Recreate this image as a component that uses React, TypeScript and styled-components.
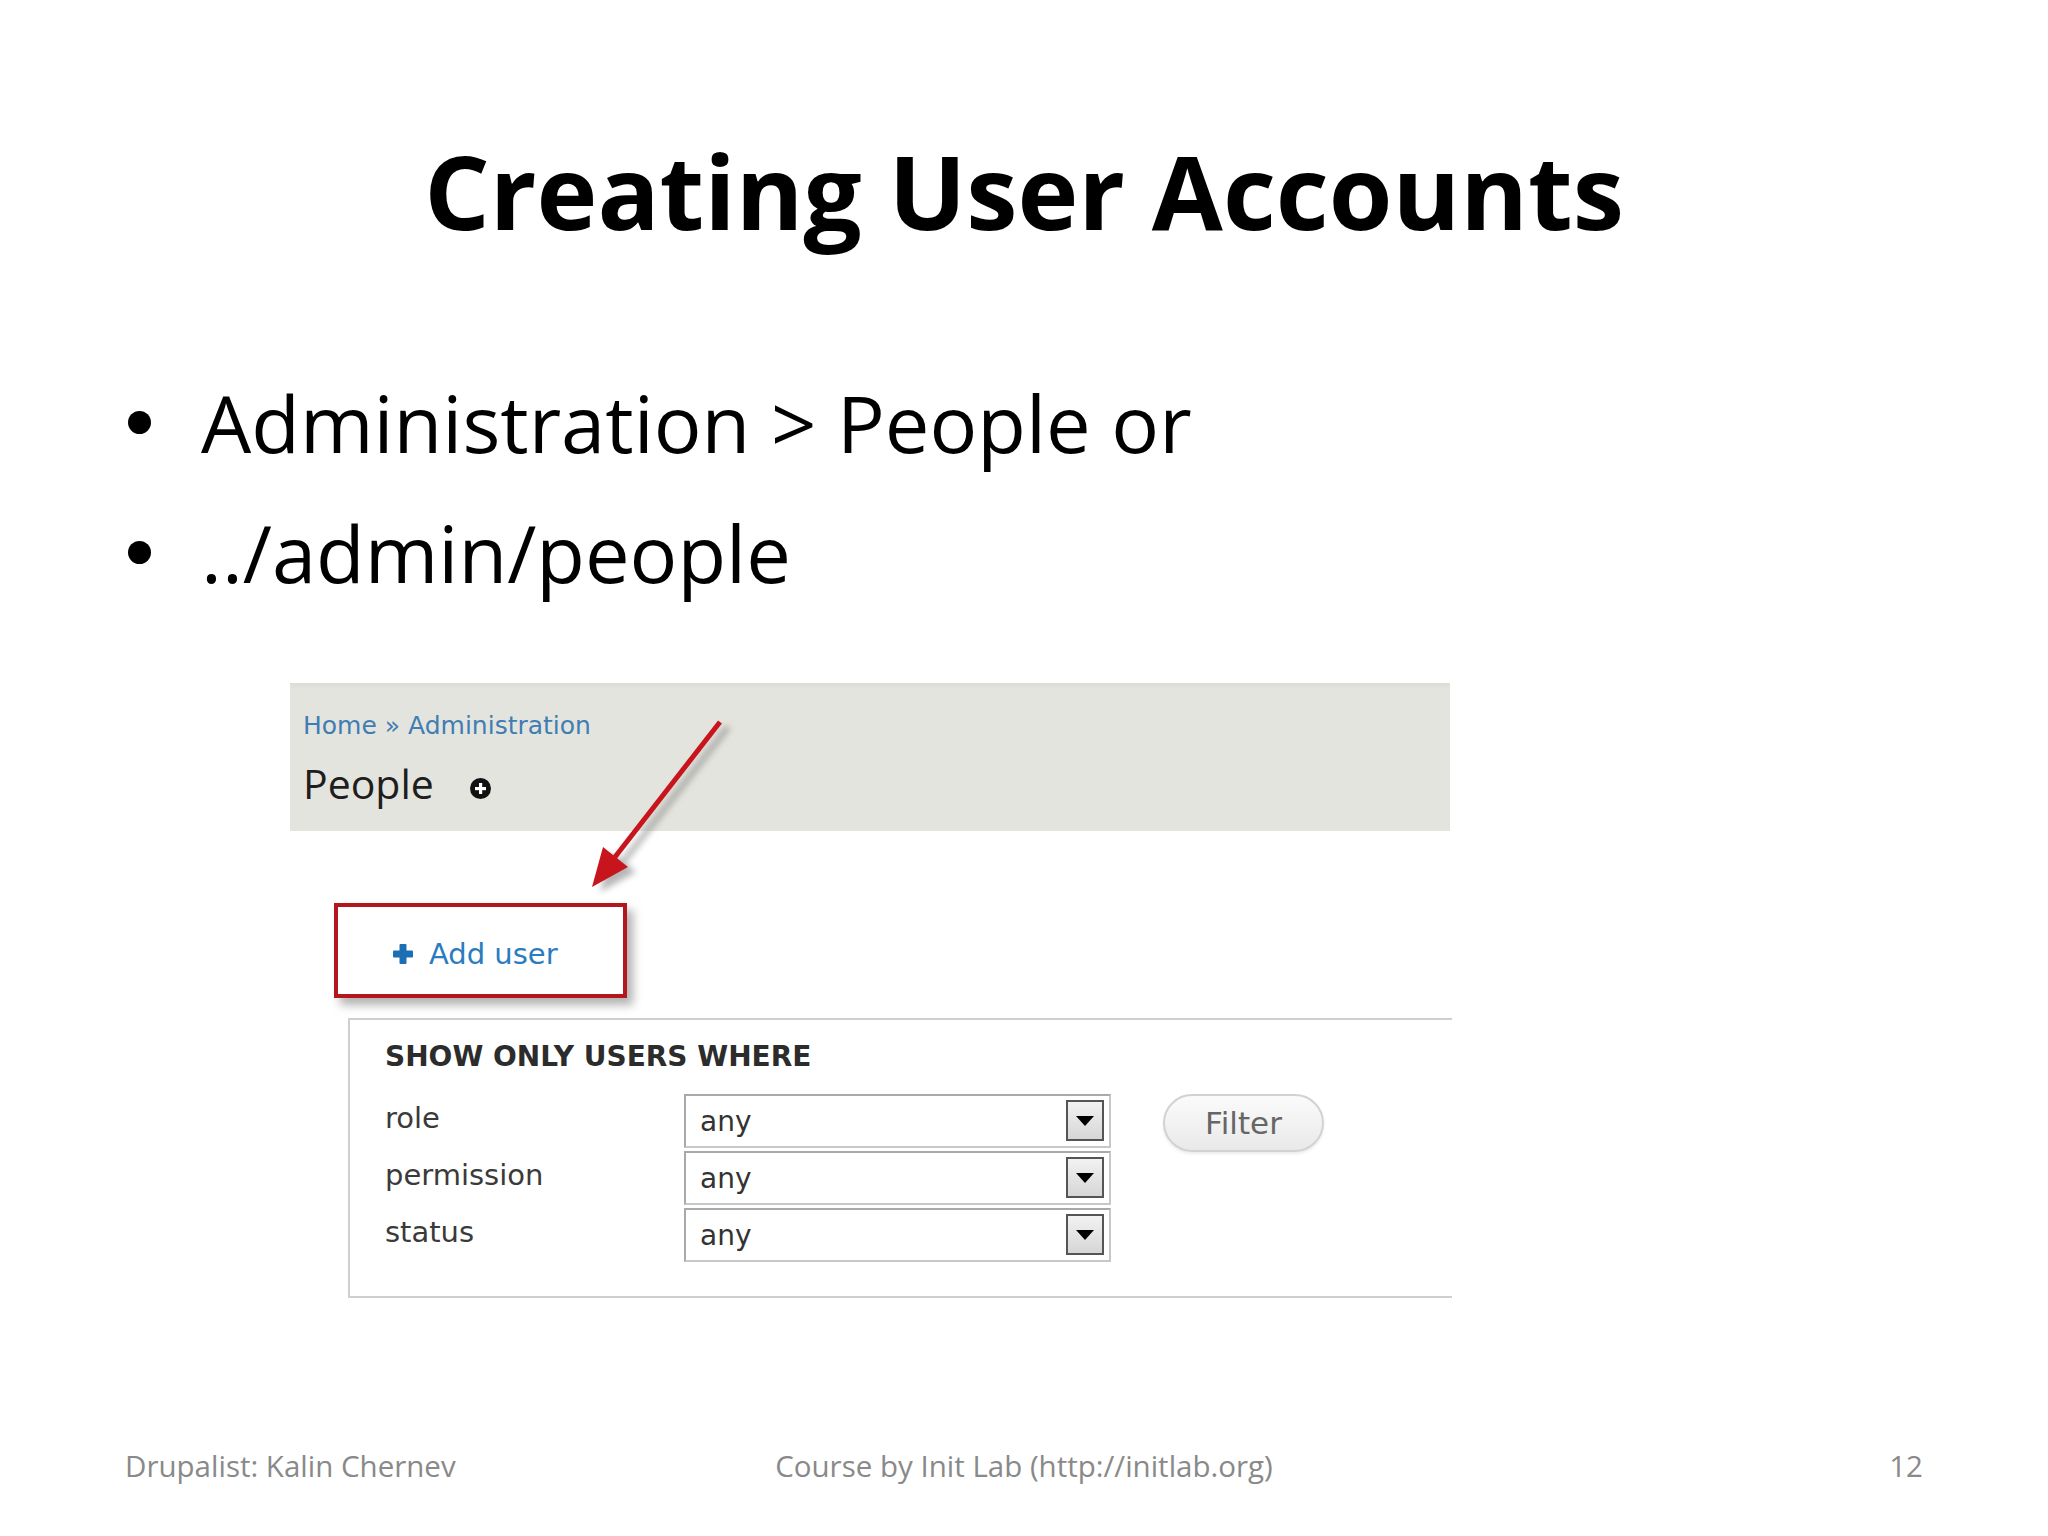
import React from 'react';
import styled, { createGlobalStyle } from 'styled-components';

const GlobalStyle = createGlobalStyle`
  html, body {
    margin: 0;
    padding: 0;
    background: #ffffff;
  }
  * {
    box-sizing: border-box;
  }
`;

const Slide = styled.div`
  width: 2048px;
  height: 1536px;
  display: flex;
  flex-direction: column;
  background: #ffffff;
  font-family: 'Open Sans', 'Noto Sans', sans-serif;
  color: #000000;
  overflow: hidden;
`;

const Title = styled.h1`
  margin: 138px 0 0;
  font-size: 103px;
  line-height: 104px;
  font-weight: 700;
  text-align: center;
`;

const Bullets = styled.ul`
  list-style: none;
  margin: 115px 0 0;
  padding: 0;
`;

const Bullet = styled.li`
  display: flex;
  align-items: flex-start;
  font-size: 79.5px;
  line-height: 130px;

  &::before {
    content: '';
    flex: none;
    width: 23px;
    height: 23px;
    border-radius: 50%;
    background: #000000;
    margin: 54px 50px 0 128px;
  }
`;

/* ---- embedded Drupal admin screenshot ---- */

const Shot = styled.div`
  position: relative;
  width: 1160px;
  margin: 66px 0 0 290px;
  background: #ffffff;
  font-family: 'DejaVu Sans', Verdana, sans-serif;
`;

const Branding = styled.div`
  height: 148px;
  padding: 28px 0 0 13px;
  background: linear-gradient(#dcdcd6 0, #e4e4de 6px, #e4e4de 100%);
`;

const Breadcrumb = styled.div`
  font-size: 25px;
  line-height: 30px;
  color: #3f7db3;
`;

const PageTitle = styled.div`
  display: flex;
  align-items: center;
  gap: 36px;
  margin-top: 17px;
  font-family: 'Open Sans', 'Noto Sans', sans-serif;
  font-size: 41px;
  line-height: 50px;
  color: #1e1e1e;

  svg {
    margin-top: 10px;
  }
`;

const Content = styled.div`
  padding: 72px 0 0;
`;

const ActionBox = styled.div`
  display: flex;
  align-items: center;
  gap: 16px;
  width: 293px;
  height: 95px;
  margin-left: 44px;
  padding: 6px 0 0 55px;
  border: 4px solid #b3161c;
  box-shadow: 6px 7px 9px rgba(0, 0, 0, 0.3);
  font-size: 29px;
  line-height: 34px;
  color: #2a7cbf;
`;

const Fieldset = styled.div`
  margin: 20px 0 0 58px;
  width: 1104px;
  padding: 20px 0 34px 35px;
  border: 2px solid #cfcfcf;
  border-right: none;
`;

const Legend = styled.div`
  font-size: 28px;
  line-height: 33px;
  font-weight: 700;
  color: #2c2c2c;
`;

const FilterGrid = styled.div`
  display: grid;
  grid-template-columns: 299px 427px auto;
  grid-auto-rows: 54px;
  row-gap: 3px;
  align-items: start;
  margin-top: 21px;
`;

const Label = styled.div`
  margin-top: 7px;
  font-size: 29px;
  line-height: 34px;
  color: #3a3a3a;
`;

const Select = styled.div`
  position: relative;
  height: 54px;
  padding-left: 14px;
  border: 2px solid #a9a9a9;
  border-right-color: #c8c8c8;
  border-bottom-color: #c8c8c8;
  background: #ffffff;
  font-size: 28px;
  line-height: 51px;
  color: #333333;
`;

const DropButton = styled.span`
  position: absolute;
  top: 4px;
  right: 5px;
  width: 38px;
  height: 41px;
  display: flex;
  align-items: center;
  justify-content: center;
  border: 2px solid #555555;
  background: linear-gradient(#f2f2f2, #d6d6d6);
`;

const FilterButton = styled.div`
  width: 161px;
  height: 58px;
  margin-left: 52px;
  display: flex;
  align-items: center;
  justify-content: center;
  border: 2px solid #d2d2d2;
  border-radius: 29px;
  background: linear-gradient(#fbfbfb, #e9e9e9);
  box-shadow: 0 2px 3px rgba(0, 0, 0, 0.08);
  font-size: 31px;
  color: #666666;
`;

const ArrowLayer = styled.svg`
  position: absolute;
  left: 0;
  top: 0;
  pointer-events: none;
`;

const Footer = styled.div`
  margin-top: auto;
  padding: 0 125px 50px;
  display: grid;
  grid-template-columns: 1fr auto 1fr;
  font-size: 29.5px;
  line-height: 40px;
  color: #898989;
`;

const FooterRight = styled.div`
  text-align: right;
`;

const CirclePlus = () => (
  <svg width="21" height="21" viewBox="0 0 21 21">
    <circle cx="10.5" cy="10.5" r="10.5" fill="#111" />
    <rect x="9" y="5" width="3.2" height="11" fill="#fff" />
    <rect x="5" y="9" width="11" height="3.2" fill="#fff" />
  </svg>
);

const BluePlus = () => (
  <svg width="20" height="20" viewBox="0 0 20 20">
    <rect x="6.5" y="0" width="7" height="20" rx="1" fill="#1c6fb2" />
    <rect x="0" y="6.5" width="20" height="7" rx="1" fill="#1c6fb2" />
  </svg>
);

const Caret = () => (
  <svg width="18" height="10" viewBox="0 0 18 10">
    <polygon points="0,0 18,0 9,10" fill="#000" />
  </svg>
);

const Arrow = () => (
  <ArrowLayer width="500" height="260" viewBox="0 0 500 260">
    <defs>
      <filter id="arrowShadow" x="-20%" y="-20%" width="140%" height="140%">
        <feGaussianBlur stdDeviation="3" />
      </filter>
    </defs>
    <g transform="translate(8 5)" fill="#7a7a7a" stroke="#7a7a7a" opacity="0.55" filter="url(#arrowShadow)">
      <line x1="430" y1="39" x2="325" y2="174" strokeWidth="6" />
      <polygon points="302,204 338,184 313,164" stroke="none" />
    </g>
    <line x1="430" y1="39" x2="325" y2="174" stroke="#c8141c" strokeWidth="5" />
    <polygon points="302,204 338,184 313,164" fill="#c8141c" />
  </ArrowLayer>
);

const filters = ['role', 'permission', 'status'];

const App: React.FC = () => {
  return (
    <Slide>
      <GlobalStyle />
      <Title>Creating User Accounts</Title>

      <Bullets>
        <Bullet>Administration &gt; People or</Bullet>
        <Bullet>../admin/people</Bullet>
      </Bullets>

      <Shot>
        <Branding>
          <Breadcrumb>Home » Administration</Breadcrumb>
          <PageTitle>
            People
            <CirclePlus />
          </PageTitle>
        </Branding>

        <Content>
          <ActionBox>
            <BluePlus />
            Add user
          </ActionBox>

          <Fieldset>
            <Legend>SHOW ONLY USERS WHERE</Legend>
            <FilterGrid>
              {filters.map((name, i) => (
                <React.Fragment key={name}>
                  <Label>{name}</Label>
                  <Select>
                    any
                    <DropButton>
                      <Caret />
                    </DropButton>
                  </Select>
                  {i === 0 ? <FilterButton>Filter</FilterButton> : <span />}
                </React.Fragment>
              ))}
            </FilterGrid>
          </Fieldset>
        </Content>

        <Arrow />
      </Shot>

      <Footer>
        <div>Drupalist: Kalin Chernev</div>
        <div>Course by Init Lab (http://initlab.org)</div>
        <FooterRight>12</FooterRight>
      </Footer>
    </Slide>
  );
};

export default App;
